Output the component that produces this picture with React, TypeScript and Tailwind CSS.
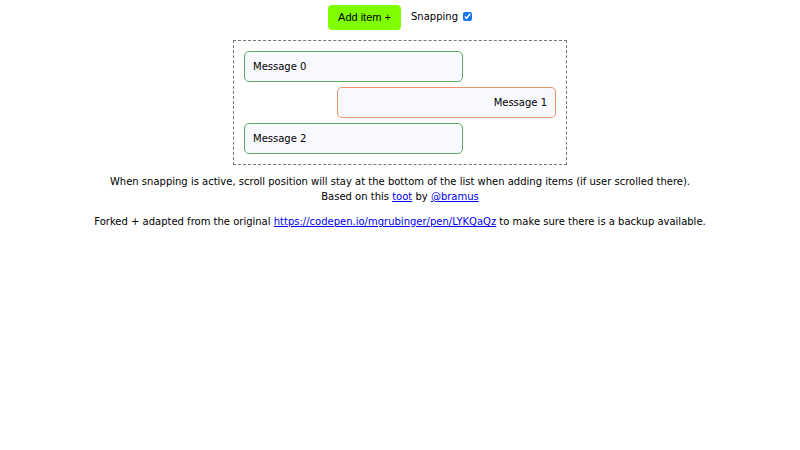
import React from "react";

export default function App() {
  const font = { fontFamily: '"DejaVu Sans", sans-serif' };
  return (
    <div className="w-[800px] h-[450px] bg-white text-black text-[10px] leading-[15px]" style={font}>
      <div className="flex items-center justify-center pt-[5px] gap-[10px]">
        <button
          className="h-[25px] w-[73px] rounded-[4px] bg-[#7fff00] text-[11px] flex items-center justify-center text-black"
          style={{ fontFamily: '"Liberation Sans", Arial, sans-serif' }}
        >
          Add item +
        </button>
        <label className="flex items-center gap-[5px] -mt-[2px]">
          <span>Snapping</span>
          <input type="checkbox" defaultChecked className="w-[9px] h-[9px] m-0 accent-[#1a73e8]" />
        </label>
      </div>
      <div className="mx-auto mt-[10px] w-[334px] h-[125px] border border-dashed border-[#777] p-[10px] flex flex-col gap-[5px]">
        <div className="w-[219px] h-[31px] rounded-[5px] border border-solid border-[#5fa85f] bg-[#f8f8ff] flex items-center px-[8px]">
          Message 0
        </div>
        <div className="w-[219px] h-[31px] self-end rounded-[5px] border-0 ring-1 ring-inset ring-[#e8956a] bg-[#f8f8ff] flex items-center justify-end px-[9px]">
          Message 1
        </div>
        <div className="w-[219px] h-[31px] rounded-[5px] border border-solid border-[#5fa85f] bg-[#f8f8ff] flex items-center px-[8px]">
          Message 2
        </div>
      </div>
      <div className="text-center mt-[9px]">
        <p>When snapping is active, scroll position will stay at the bottom of the list when adding items (if user scrolled there).</p>
        <p>
          Based on this <a href="#" className="underline text-[#0000ee]">toot</a> by{" "}
          <a href="#" className="underline text-[#0000ee]">@bramus</a>
        </p>
        <p className="mt-[10px]">
          Forked + adapted from the original{" "}
          <a href="#" className="underline text-[#0000ee]">https://codepen.io/mgrubinger/pen/LYKQaQz</a> to make sure there is a backup available.
        </p>
      </div>
    </div>
  );
}
